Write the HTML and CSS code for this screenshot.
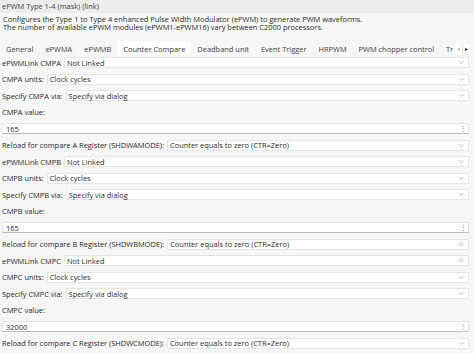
FILE: index.html
```html
<!DOCTYPE html>
<html>
<head>
<meta charset="utf-8">
<link rel="stylesheet" href="styles.css">
</head>
<body>
<div class="title">ePWM Type 1-4 (mask) (link)</div>
<div class="desc">
  <div>Configures the Type 1 to Type 4 enhanced Pulse Width Modulator (ePWM) to generate PWM waveforms.</div>
  <div>The number of available ePWM modules (ePWM1-ePWM16) vary between C2000 processors.</div>
</div>
<div class="tabs">
  <div class="tablist">
    <span class="tab">General</span>
    <span class="tab">ePWMA</span>
    <span class="tab">ePWMB</span>
    <span class="tab active">Counter Compare</span>
    <span class="tab">Deadband unit</span>
    <span class="tab">Event Trigger</span>
    <span class="tab">HRPWM</span>
    <span class="tab">PWM chopper control</span>
    <span class="tab">Tri</span>
  </div>
  <div class="scroller"><span class="arr dim">&#9666;</span><span class="arr">&#9656;</span></div>
</div>
<div class="panel">
  <div class="row"><span class="lbl">ePWMLink CMPA</span><div class="select"><span>Not Linked</span><svg class="chev" width="5" height="3" viewBox="0 0 5 3"><path d="M0.5 0.5 L2.5 2.5 L4.5 0.5" fill="none" stroke="#a0a0a0" stroke-width="0.8"/></svg></div></div>
  <div class="row"><span class="lbl">CMPA units:</span><div class="select"><span>Clock cycles</span><svg class="chev" width="5" height="3" viewBox="0 0 5 3"><path d="M0.5 0.5 L2.5 2.5 L4.5 0.5" fill="none" stroke="#a0a0a0" stroke-width="0.8"/></svg></div></div>
  <div class="row"><span class="lbl">Specify CMPA via:</span><div class="select"><span>Specify via dialog</span><svg class="chev" width="5" height="3" viewBox="0 0 5 3"><path d="M0.5 0.5 L2.5 2.5 L4.5 0.5" fill="none" stroke="#a0a0a0" stroke-width="0.8"/></svg></div></div>
  <div class="row"><span class="lbl">CMPA value:</span></div>
  <div class="row"><div class="edit"><span>165</span><span class="dots">&#8942;</span></div></div>
  <div class="row"><span class="lbl">Reload for compare A Register (SHDWAMODE):</span><div class="select"><span>Counter equals to zero (CTR=Zero)</span><svg class="chev" width="5" height="3" viewBox="0 0 5 3"><path d="M0.5 0.5 L2.5 2.5 L4.5 0.5" fill="none" stroke="#a0a0a0" stroke-width="0.8"/></svg></div></div>
  <div class="row"><span class="lbl">ePWMLink CMPB</span><div class="select"><span>Not Linked</span><svg class="chev" width="5" height="3" viewBox="0 0 5 3"><path d="M0.5 0.5 L2.5 2.5 L4.5 0.5" fill="none" stroke="#a0a0a0" stroke-width="0.8"/></svg></div></div>
  <div class="row"><span class="lbl">CMPB units:</span><div class="select"><span>Clock cycles</span><svg class="chev" width="5" height="3" viewBox="0 0 5 3"><path d="M0.5 0.5 L2.5 2.5 L4.5 0.5" fill="none" stroke="#a0a0a0" stroke-width="0.8"/></svg></div></div>
  <div class="row"><span class="lbl">Specify CMPB via:</span><div class="select"><span>Specify via dialog</span><svg class="chev" width="5" height="3" viewBox="0 0 5 3"><path d="M0.5 0.5 L2.5 2.5 L4.5 0.5" fill="none" stroke="#a0a0a0" stroke-width="0.8"/></svg></div></div>
  <div class="row"><span class="lbl">CMPB value:</span></div>
  <div class="row"><div class="edit"><span>165</span><span class="dots">&#8942;</span></div></div>
  <div class="row"><span class="lbl">Reload for compare B Register (SHDWBMODE):</span><div class="select"><span>Counter equals to zero (CTR=Zero)</span><svg class="chev" width="5" height="3" viewBox="0 0 5 3"><path d="M0.5 0.5 L2.5 2.5 L4.5 0.5" fill="none" stroke="#a0a0a0" stroke-width="0.8"/></svg></div></div>
  <div class="row"><span class="lbl">ePWMLink CMPC</span><div class="select"><span>Not Linked</span><svg class="chev" width="5" height="3" viewBox="0 0 5 3"><path d="M0.5 0.5 L2.5 2.5 L4.5 0.5" fill="none" stroke="#a0a0a0" stroke-width="0.8"/></svg></div></div>
  <div class="row"><span class="lbl">CMPC units:</span><div class="select"><span>Clock cycles</span><svg class="chev" width="5" height="3" viewBox="0 0 5 3"><path d="M0.5 0.5 L2.5 2.5 L4.5 0.5" fill="none" stroke="#a0a0a0" stroke-width="0.8"/></svg></div></div>
  <div class="row"><span class="lbl">Specify CMPC via:</span><div class="select"><span>Specify via dialog</span><svg class="chev" width="5" height="3" viewBox="0 0 5 3"><path d="M0.5 0.5 L2.5 2.5 L4.5 0.5" fill="none" stroke="#a0a0a0" stroke-width="0.8"/></svg></div></div>
  <div class="row"><span class="lbl">CMPC value:</span></div>
  <div class="row"><div class="edit"><span>32000</span><span class="dots">&#8942;</span></div></div>
  <div class="row"><span class="lbl">Reload for compare C Register (SHDWCMODE):</span><div class="select"><span>Counter equals to zero (CTR=Zero)</span><svg class="chev" width="5" height="3" viewBox="0 0 5 3"><path d="M0.5 0.5 L2.5 2.5 L4.5 0.5" fill="none" stroke="#a0a0a0" stroke-width="0.8"/></svg></div></div>
</div>
</body>
</html>
```
FILE: styles.css
```css
html, body {
  margin: 0;
  padding: 0;
}
body {
  width: 474px;
  height: 353px;
  overflow: hidden;
  background: #f6f6f6;
  font-family: "Open Sans", "Noto Sans", sans-serif;
  font-size: 7.45px;
  color: #2a2a2a;
}
.title {
  height: 13px;
  line-height: 13px;
  padding-left: 2px;
  background: #ececec;
  color: #444;
}
.desc {
  padding: 1.5px 3px 0 3px;
  height: 25.5px;
  line-height: 8.6px;
  background: #f7f7f7;
}
.desc div {
  white-space: nowrap;
}
.tabs {
  display: flex;
  height: 14px;
  margin-top: 1px;
  overflow: hidden;
}
.tablist {
  display: flex;
  flex: 1;
  overflow: hidden;
  white-space: nowrap;
}
.tab {
  padding: 0 6px;
  line-height: 16px;
  color: #444;
}
.tab.active {
  background: #ffffff;
  color: #333;
}
.scroller {
  display: flex;
  align-items: center;
  margin: 2px 4px 0 2px;
}
.arr {
  font-size: 6px;
  line-height: 10px;
  width: 7px;
  text-align: center;
  background: #fff;
  color: #222;
}
.arr.dim {
  color: #bbb;
  border-right: 1px solid #ddd;
}
.panel {
  display: flex;
  flex-direction: column;
  gap: 5.5px;
  padding: 2px 5px 0 2px;
}
.row {
  display: flex;
  align-items: center;
  height: 11px;
  white-space: nowrap;
}
.lbl {
  margin-right: 3px;
}
.select {
  flex: 1;
  height: 11px;
  box-sizing: border-box;
  background: #fff;
  border: 1px solid #e4e4e4;
  border-radius: 1px;
  display: flex;
  align-items: center;
  justify-content: space-between;
  padding: 0 4px 0 2px;
}
.edit {
  flex: 1;
  height: 11px;
  box-sizing: border-box;
  background: #fff;
  border: 1px solid #e4e4e4;
  border-bottom: 1px solid #bdbdbd;
  display: flex;
  align-items: center;
  justify-content: space-between;
  padding: 0 1px 0 3px;
}
.dots {
  color: #777;
  font-size: 7px;
  line-height: 9px;
}
.chev {
  display: block;
}
```
